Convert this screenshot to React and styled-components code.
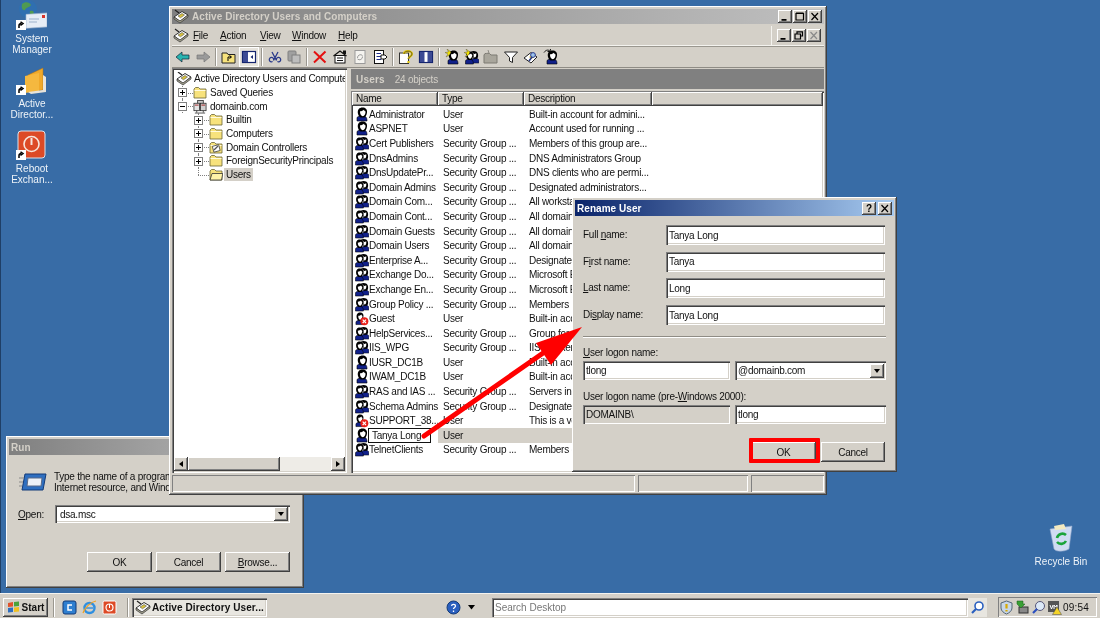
import styled, { createGlobalStyle, css } from 'styled-components';

const GlobalStyle = createGlobalStyle`
  html, body { margin: 0; padding: 0; background: #3a6ea5; }
  body { font-family: "Liberation Sans", "Noto Sans", sans-serif; font-size: 10px; letter-spacing: -0.25px; color: #111; }
  u { text-underline-offset: 1px; }
`;

const raised = css`
  background: #d4d0c8;
  box-shadow: inset -1px -1px #404040, inset 1px 1px #fff, inset -2px -2px #808080, inset 2px 2px #d4d0c8;
`;

const sunken = css`
  box-shadow: inset 1px 1px #808080, inset 2px 2px #404040, inset -1px -1px #fff, inset -2px -2px #d4d0c8;
`;

const Screen = styled.div`
  width: 1100px;
  height: 618px;
  display: flex;
  flex-direction: column;
  overflow: hidden;
  filter: blur(0.35px);
`;

const Desktop = styled.div`
  position: relative;
  flex: 1;
  background: #386ca6;
  border-left: 1px solid #1f3f66;
`;

const Glyph = styled.svg`
  flex: none;
  display: block;
`;

/* desktop icons */
const Shortcut = styled.div`
  position: absolute;
  left: ${(p) => p.$x}px;
  top: ${(p) => p.$y}px;
  width: 60px;
  display: flex;
  flex-direction: column;
  align-items: center;
  color: #eef3f8;
  line-height: 11px;
  text-align: center;
  letter-spacing: 0;
`;

const ShortcutImage = styled.div`
  position: relative;
  width: 30px;
  height: 30px;
  margin-bottom: 3px;
`;

const ShortcutArrow = styled.svg`
  position: absolute;
  left: -1px;
  bottom: 0;
  width: 10px;
  height: 10px;
`;

const Arrowlet = () => (
  <ShortcutArrow viewBox="0 0 10 10">
    <rect width="10" height="10" fill="#fff" />
    <path d="M3 8V5.5C3 4 4 3.5 5.5 3.5M4.5 1.8L7 3.5L4.5 5.5" fill="none" stroke="#000" strokeWidth="1.5" />
  </ShortcutArrow>
);

/* windows */
const Win = styled.div`
  position: absolute;
  left: ${(p) => p.$x}px;
  top: ${(p) => p.$y}px;
  width: ${(p) => p.$w}px;
  height: ${(p) => p.$h}px;
  box-sizing: border-box;
  padding: 3px;
  display: flex;
  flex-direction: column;
  ${raised}
`;

const TitleBar = styled.div`
  flex: none;
  height: ${(p) => p.$h || 16}px;
  display: flex;
  align-items: center;
  padding: 0 2px 0 ${(p) => p.$pad || 2}px;
  gap: 3px;
  font-weight: 700;
  color: ${(p) => (p.$active ? '#fff' : '#d4d0c8')};
  background: ${(p) =>
    p.$active
      ? 'linear-gradient(90deg, #0a246a, #a6caf0)'
      : 'linear-gradient(90deg, #808080, #c0c0c0)'};
`;

const TitleText = styled.span`
  flex: 1;
  white-space: nowrap;
  letter-spacing: 0.05px;
`;

const CapsGroup = styled.div`
  display: flex;
  gap: ${(p) => p.$gap || 0}px;
`;

const CapButton = styled.div`
  width: 14px;
  height: 13px;
  display: flex;
  align-items: center;
  justify-content: center;
  font-size: 10px;
  font-weight: 700;
  color: #000;
  ${raised}
`;

const CapIcon = ({ d, dim }) => (
  <svg width="10" height="9" viewBox="0 0 10 9">
    <path d={d} fill="none" stroke={dim ? '#8a8a8a' : '#000'} strokeWidth="1.2" />
  </svg>
);

const MIN = 'M1.5 7.5H6.5M1.5 8.2H6.5';
const MAX = 'M1 1.5H8.5V8H1ZM1 1H8.5';
const CLOSE = 'M1.5 1L8 8M8 1L1.5 8';
const RESTORE = 'M3 2.5V0.8H8.5V5H7M1 3H6.5V8H1Z';

const MenuBar = styled.div`
  flex: none;
  height: 19px;
  display: flex;
  align-items: center;
  margin-top: 2px;
  border-bottom: 1px solid #f4f3ef;
  box-shadow: 0 1px 0 #9a978f;
`;

const MenuIcon = styled.div`
  width: 20px;
  padding-left: 1px;
  display: flex;
`;

const MenuItem = styled.span`
  width: ${(p) => p.$w}px;
`;

const MdiButtons = styled.div`
  margin-left: auto;
  height: 100%;
  display: flex;
  align-items: center;
  gap: 1px;
  padding: 0 3px 0 5px;
  border-left: 1px solid #f4f3ef;
`;

const Toolbar = styled.div`
  flex: none;
  height: 21px;
  display: flex;
  align-items: center;
  padding-left: 1px;
  border-bottom: 1px solid #8f8c85;
`;

const ToolButton = styled.div`
  width: 19.9px;
  height: 20px;
  display: flex;
  align-items: center;
  justify-content: center;
  ${(p) => p.$on && 'box-shadow: inset 1px 1px #fff, inset -1px -1px #fff; background: #e6e3dc;'}
`;

const ToolSep = styled.div`
  width: 2px;
  height: 18px;
  margin: 0 2px;
  border-left: 1px solid #9a978f;
  border-right: 1px solid #fff;
  box-sizing: border-box;
`;

const Panes = styled.div`
  flex: 1;
  min-height: 0;
  display: flex;
  gap: 4px;
`;

const TreePane = styled.div`
  position: relative;
  width: 175px;
  flex: none;
  box-sizing: border-box;
  padding: 4px 2px 2px;
  display: flex;
  flex-direction: column;
  background: #fff;
  overflow: hidden;
  ${sunken}
`;

const TreeBody = styled.div`
  flex: 1;
  overflow: hidden;
`;

const TreeRow = styled.div`
  height: 13.7px;
  display: flex;
  align-items: center;
  padding-left: ${(p) => (p.$depth ? (p.$depth - 1) * 16 : 2)}px;
  white-space: nowrap;
`;

const Expander = styled.div`
  position: relative;
  flex: none;
  width: 16px;
  height: 100%;
  margin-right: 3px;

  &::before {
    content: '';
    position: absolute;
    left: 8px;
    top: 0;
    bottom: ${(p) => (p.$last ? '50%' : 0)};
    border-left: 1px dotted #808080;
  }
  &::after {
    content: '';
    position: absolute;
    left: 8px;
    right: -3px;
    top: 50%;
    border-top: 1px dotted #808080;
  }
`;

const PlusBox = styled.div`
  position: absolute;
  z-index: 1;
  left: 4px;
  top: 2.5px;
  width: 9px;
  height: 9px;
  box-sizing: border-box;
  border: 1px solid #808080;
  background:
    linear-gradient(#000, #000) center / 5px 1px no-repeat,
    ${(p) => (p.$open ? '#fff' : 'linear-gradient(#000, #000) center / 1px 5px no-repeat, #fff')};
`;

const TreeLabel = styled.span`
  margin-left: ${(p) => (p.$root ? 0 : 1)}px;
  padding: 0 2px;
  line-height: 13px;
  ${(p) => p.$selected && 'background: #d4d0c8;'}
`;

const HScroll = styled.div`
  flex: none;
  height: 14px;
  display: flex;
  background: #eeece7;
`;

const ScrollArrow = styled.div`
  width: 14px;
  display: flex;
  align-items: center;
  justify-content: center;
  ${raised}
  ${(p) => p.$right && 'margin-left: auto;'}
  &::before {
    content: '';
    border: 3.5px solid transparent;
    ${(p) =>
      p.$right
        ? 'border-right-width: 0; border-left: 4px solid #000;'
        : 'border-left-width: 0; border-right: 4px solid #000;'}
  }
`;

const ScrollThumb = styled.div`
  width: 92px;
  ${raised}
`;

const ListPane = styled.div`
  flex: 1;
  min-width: 0;
  display: flex;
  flex-direction: column;
`;

const ListBanner = styled.div`
  flex: none;
  height: 20px;
  display: flex;
  align-items: center;
  gap: 10px;
  padding-left: 5px;
  background: #808080;
  color: #d4d0c8;
  border-top: 1px solid #d4d0c8;
  strong { letter-spacing: 0.2px; }
`;

const ListFrame = styled.div`
  flex: 1;
  min-height: 0;
  margin-top: 2px;
  padding: 1px;
  background: #fff;
  display: flex;
  flex-direction: column;
  overflow: hidden;
  ${sunken}
`;

const ColumnHeads = styled.div`
  flex: none;
  height: 14px;
  display: grid;
  grid-template-columns: 86px 86px 128px 1fr;
  margin-bottom: 1px;
`;

const ColumnHead = styled.div`
  padding-left: 4px;
  line-height: 14px;
  background: #d4d0c8;
  box-shadow: inset -1px -1px #404040, inset 1px 1px #fff, inset -2px -2px #808080;
`;

const Row = styled.div`
  height: 14.6px;
  display: grid;
  grid-template-columns: 86px 86px 128px;
  align-items: center;
  white-space: nowrap;
`;

const NameCell = styled.div`
  display: flex;
  align-items: center;
  padding-left: 3px;
  overflow: hidden;
`;

const NameText = styled.span`
  line-height: 13px;
  ${(p) => p.$editing && 'outline: 1px solid #111; padding: 0 9px 0 3px;'}
`;

const TextCell = styled.div`
  padding-left: 5px;
  height: 100%;
  display: flex;
  align-items: center;
  overflow: hidden;
  ${(p) => p.$selected && 'background: #d4d0c8;'}
`;

const SelectedFill = styled.div`
  background: #d4d0c8;
  height: 100%;
`;

const StatusBar = styled.div`
  flex: none;
  height: 17px;
  margin-top: 2px;
  display: grid;
  grid-template-columns: 463px 110px 1fr;
  gap: 3px;
`;

const StatusCell = styled.div`
  box-shadow: inset 1px 1px #808080, inset -1px -1px #fff;
`;

/* dialog content */
const DialogBody = styled.div`
  flex: 1;
  display: flex;
  flex-direction: column;
  padding: 9px 8px 0 8px;
`;

const FieldGrid = styled.div`
  display: grid;
  grid-template-columns: 83px 219px;
  grid-auto-rows: 20px;
  gap: 6.7px 0;
  align-items: center;
`;

const FieldLabel = styled.label`
  line-height: 12px;
`;

const TextBox = styled.div`
  height: ${(p) => p.$h || 20}px;
  box-sizing: border-box;
  padding: 0 3px;
  display: flex;
  align-items: center;
  white-space: nowrap;
  background: ${(p) => (p.$disabled ? '#d4d0c8' : '#fff')};
  ${sunken}
`;

const Divider = styled.div`
  margin: 11px 0 9px;
  border-top: 1px solid #8f8c85;
  border-bottom: 1px solid #fff;
`;

const LogonRow = styled.div`
  display: grid;
  grid-template-columns: 147px 151px;
  justify-content: space-between;
  width: 303px;
  margin-top: 2px;
`;

const SectionLabel = styled.div`
  line-height: 12px;
  margin-top: ${(p) => p.$mt || 0}px;
`;

const ComboArrow = styled.div`
  margin-left: auto;
  margin-right: -1px;
  width: 14px;
  height: 14px;
  display: flex;
  align-items: center;
  justify-content: center;
  ${raised}
  &::before {
    content: '';
    border: 3.5px solid transparent;
    border-bottom-width: 0;
    border-top: 4px solid #000;
  }
`;

const ButtonRow = styled.div`
  display: flex;
  justify-content: flex-end;
  gap: ${(p) => p.$gap || 4}px;
  margin-top: ${(p) => p.$mt || 0}px;
  padding-right: ${(p) => p.$pr || 0}px;
`;

const Button = styled.div`
  width: ${(p) => p.$w || 65}px;
  height: 20px;
  display: flex;
  align-items: center;
  justify-content: center;
  ${raised}
`;

const RunBody = styled.div`
  flex: 1;
  display: flex;
  flex-direction: column;
  padding: 0 8px;
`;

const RunIntro = styled.div`
  display: flex;
  align-items: center;
  gap: 7px;
  margin-top: 16px;
  padding-left: 2px;
  white-space: nowrap;
  line-height: 11px;
`;

const RunOpen = styled.div`
  display: flex;
  align-items: center;
  margin-top: 12px;
  padding-left: 1px;
`;

const RunLabel = styled.label`
  width: 37px;
`;

const RunInput = styled(TextBox)`
  width: 235px;
  padding-left: 5px;
`;

/* annotation */
const RedBox = styled.div`
  position: absolute;
  left: 748px;
  top: 438px;
  width: 71px;
  height: 25px;
  box-sizing: border-box;
  border: 4px solid #f00;
  border-radius: 1px;
`;

const Overlay = styled.svg`
  position: absolute;
  left: 0;
  top: 0;
  width: 1100px;
  height: 593px;
  pointer-events: none;
`;

/* taskbar */
const Taskbar = styled.div`
  flex: none;
  height: 25px;
  box-sizing: border-box;
  display: flex;
  align-items: center;
  padding: 2px 3px 0 3px;
  background: #d4d0c8;
  border-top: 1px solid #f4f3ef;
`;

const StartButton = styled.div`
  width: 45px;
  height: 19px;
  display: flex;
  align-items: center;
  justify-content: center;
  gap: 2px;
  font-weight: 700;
  letter-spacing: 0;
  ${raised}
`;

const TaskSep = styled.div`
  flex: none;
  width: 2px;
  height: 19px;
  margin: 0 ${(p) => p.$gap || 5}px;
  box-sizing: border-box;
  border-left: 1px solid #9a978f;
  border-right: 1px solid #fff;
`;

const QuickLaunch = styled.div`
  display: flex;
  gap: 5px;
  padding: 0 7px 0 2px;
`;

const TaskButton = styled.div`
  flex: none;
  width: 135px;
  height: 19px;
  box-sizing: border-box;
  display: flex;
  align-items: center;
  gap: 1px;
  padding-left: 3px;
  font-weight: 700;
  letter-spacing: 0.1px;
  background: #e8e6e0;
  white-space: nowrap;
  ${sunken}
`;

const DeskbarHelp = styled.div`
  margin-left: 179px;
  display: flex;
  align-items: center;
  gap: 7px;
`;

const SearchWrap = styled.div`
  display: flex;
  margin-left: 17px;
  height: 19px;
`;

const SearchBox = styled.div`
  width: 476px;
  box-sizing: border-box;
  padding-left: 3px;
  display: flex;
  align-items: center;
  color: #777;
  background: #fff;
  letter-spacing: 0;
  ${sunken}
`;

const SearchGo = styled.div`
  width: 19px;
  display: flex;
  align-items: center;
  justify-content: center;
  background: #e8e6e0;
`;

const Tray = styled.div`
  margin-left: auto;
  flex: none;
  width: 99px;
  height: 20px;
  box-sizing: border-box;
  display: flex;
  align-items: center;
  gap: 1px;
  padding: 0 8px 0 1px;
  box-shadow: inset 1px 1px #808080, inset -1px -1px #fff;
`;

const Clock = styled.span`
  margin-left: auto;
  letter-spacing: 0.2px;
`;

/* drawings */
const Snap = () => (
  <Glyph width="16" height="15" viewBox="0 0 16 15">
    <path d="M1 8L9 2.5L15 6L7 12.5Z" fill="#fff" stroke="#333" />
    <path d="M1 10L7 14L15 8V6L7 12L1 8Z" fill="#a5a28f" stroke="#333" strokeWidth="0.7" />
    <path d="M5 7L9 4.5L11.5 6L7.5 8.8Z" fill="#d9c33d" stroke="#555" strokeWidth="0.6" />
    <path d="M2 1L6 4" stroke="#222" strokeWidth="1.2" />
  </Glyph>
);

const User = () => (
  <Glyph width="14" height="15" viewBox="0 0 14 15">
    <path d="M2 14V11C2 9.6 4 9 7 9C10 9 12 9.6 12 14Z" fill="#10208a" stroke="#000" strokeWidth="0.6" />
    <path d="M3 7C2 2.5 4.5 0.5 7.5 0.5C10.5 0.5 12.5 2.5 12 5.5C11.7 8 10.8 9.5 9.5 10.5H5.5C4.2 9.8 3.5 8.5 3 7Z" fill="#000" />
    <path d="M5 4.3C6.8 4.3 8 3.7 9 2.8C9.3 3.8 10 4.3 10.6 4.5C10.6 6.8 9.4 9.2 7.8 9.2C6.3 9.2 4.8 7 5 4.3Z" fill="#fff" />
  </Glyph>
);

const Group = () => (
  <Glyph width="14" height="15" viewBox="0 0 15 15">
    <path d="M6 1.5C8 0 12.5 0 13.6 3C14.4 5 14.4 7.5 12.5 9H9V2.8Z" fill="#000" />
    <path d="M9.3 3.5C10 3.8 11.2 3.5 12 3C12.4 5 11.8 7.2 10.6 7.5C9.6 7.7 9.3 5.5 9.3 3.5Z" fill="#fff" />
    <path d="M6.5 9L13.5 8.5C15 9.5 15 11 14.8 13.5H6.5Z" fill="#10208a" stroke="#000" strokeWidth="0.5" />
    <path d="M0.5 14.5V11.3C0.5 10 2.5 9.4 4.5 9.4C7.5 9.4 9 10.6 9 14.5Z" fill="#10208a" stroke="#000" strokeWidth="0.6" />
    <path d="M1.5 7.5C0.3 3 2.5 1 5 1C8 1 9.3 3 8.8 5.6C8.5 7.6 7.8 9.2 6.6 10.2H3.5C2.6 9.5 2 8.5 1.5 7.5Z" fill="#000" />
    <path d="M3 4.6C4.5 4.6 5.6 4 6.4 3.3C6.7 4.1 7.2 4.5 7.8 4.7C7.8 6.6 6.6 8.8 5.3 8.8C4 8.8 2.9 6.8 3 4.6Z" fill="#fff" />
  </Glyph>
);

const DisabledUser = () => (
  <Glyph width="14" height="15" viewBox="0 0 15 15">
    <path d="M1 14V11.5C1 10 3 9.5 5 9.5C8 9.5 9 10.5 9 14Z" fill="#10208a" stroke="#000" strokeWidth="0.6" />
    <path d="M2 7.5C0.8 3 3 1 5.5 1C8.3 1 9.5 2.8 9 5.5C8.8 7.5 8 9 7 10H4C3 9.5 2.5 8.5 2 7.5Z" fill="#000" />
    <path d="M3.5 4.5C5 4.5 6 4 6.8 3.2C7 4 7.5 4.5 8 4.7C8 6.5 7 8.8 5.6 8.8C4.3 8.8 3.3 6.8 3.5 4.5Z" fill="#fff" />
    <circle cx="10" cy="10.5" r="4.3" fill="#e8201a" />
    <path d="M8.2 8.7L11.8 12.3M11.8 8.7L8.2 12.3" stroke="#fff" strokeWidth="1.2" />
  </Glyph>
);

const Folder = ({ open, ou }) => (
  <Glyph width="14" height="13" viewBox="0 0 14 13">
    <path d="M1 3V12H13V3H7L5.5 1.5H2.5Z" fill="#f7e27c" stroke="#6b6636" strokeWidth="0.8" />
    {open && <path d="M1 12L3 5.5H13.8L12.5 12Z" fill="#fff3a8" stroke="#333" strokeWidth="0.8" />}
    {!open && <path d="M1.5 4.5H12.5" stroke="#fffbe0" />}
    {ou && (
      <g>
        <rect x="4" y="4.5" width="6.5" height="6" fill="#fff" stroke="#333" strokeWidth="0.7" transform="rotate(-15 7 7.5)" />
        <path d="M5 9L9 5" stroke="#555" strokeWidth="1.2" />
      </g>
    )}
  </Glyph>
);

const Server = () => (
  <Glyph width="14" height="15" viewBox="1 0 15 15">
    <rect x="6" y="1" width="6" height="8" fill="#c8c8c8" stroke="#222" strokeWidth="0.8" />
    <rect x="2" y="4" width="6" height="8" fill="#e4e4e4" stroke="#222" strokeWidth="0.8" />
    <rect x="9" y="4" width="6" height="8" fill="#d0d0d0" stroke="#222" strokeWidth="0.8" />
    <path d="M3 6H7M10 6H14" stroke="#a02020" />
    <path d="M5 12V14M12 12V14M3 14.5H14" stroke="#222" strokeWidth="0.8" />
  </Glyph>
);

const tools = [
  <path key="a" d="M1 8L7 3V6H14V10H7V13Z" fill="#28b4b0" stroke="#123" strokeWidth="0.7" />,
  <path key="b" d="M15 8L9 3V6H2V10H9V13Z" fill="#9a9a9a" stroke="#777" strokeWidth="0.7" />,
  null,
  <g key="c"><path d="M1 4H6L7 5.5H14V14H1Z" fill="#f7e27c" stroke="#222" /><path d="M7 12V8H10M8.5 6.5L10.5 8L8.5 9.5" fill="none" stroke="#000" /></g>,
  <g key="d"><rect x="1.5" y="2.5" width="13" height="11" fill="#fff" stroke="#15256f" strokeWidth="1.2" /><rect x="2" y="3" width="5" height="10" fill="#3c4a94" /><path d="M12 6L9.5 8L12 10Z" fill="#15256f" /></g>,
  null,
  <path key="e" d="M5 1L9.5 9.5M11 1L6.5 9.5M6.5 9.5A2.2 2.2 0 1 0 5.6 10.5M9.5 9.5A2.2 2.2 0 1 1 10.4 10.5" transform="translate(0 2)" fill="none" stroke="#2a3a8a" strokeWidth="1.3" />,
  <g key="f"><rect x="2" y="2" width="8" height="10" rx="1" fill="#a0a0a0" stroke="#808080" /><rect x="6" y="6" width="8" height="8" fill="#bdbdbd" stroke="#808080" /></g>,
  null,
  <path key="g" d="M2 2.5L13.5 13.5M13.5 2.5L2 13.5" stroke="#e41010" strokeWidth="2" />,
  <g key="h"><path d="M1.5 7L8 2L14.5 7" fill="none" stroke="#111" strokeWidth="1.2" /><rect x="3" y="6.5" width="10" height="7.5" fill="#fff" stroke="#111" /><path d="M5 9H11M5 11.5H11" stroke="#111" /><rect x="11" y="1.5" width="3" height="3.5" fill="#111" /></g>,
  <g key="i"><rect x="3" y="1.5" width="10" height="13" fill="#f4f3ef" stroke="#9a9a9a" /><path d="M5.5 9A3 3 0 0 1 10.5 6.5M10.5 7.5A3 3 0 0 1 5.5 10" fill="none" stroke="#9a9a9a" /></g>,
  <g key="j"><rect x="2.5" y="1.5" width="9" height="13" fill="#fff" stroke="#111" /><path d="M4.5 4.5H9M4.5 7.5H9M4.5 10.5H9" stroke="#1b2a8a" strokeWidth="1.2" /><path d="M9 6H13L15 8L13 10H9Z" fill="#fff" stroke="#111" /></g>,
  null,
  <g key="k"><rect x="1.5" y="4" width="9" height="10.5" fill="#fff" stroke="#333" /><path d="M6 5C6 1.5 14 1 14 5C14 7.5 10.5 7.5 10.5 10M10.5 12V14" fill="none" stroke="#e3c810" strokeWidth="2.2" /><path d="M6 5C6 1.5 14 1 14 5C14 7.5 10.5 7.5 10.5 10" fill="none" stroke="#222" strokeWidth="0.6" /></g>,
  <g key="l"><rect x="1.5" y="2.5" width="13" height="11" fill="#fff" stroke="#15256f" strokeWidth="1.2" /><rect x="2" y="3" width="4.5" height="10" fill="#3c4a94" /><rect x="9.5" y="3" width="4.5" height="10" fill="#3c4a94" /></g>,
  null,
];

const dirTools = [
  <g key="m"><g transform="translate(2 1)"><User /></g><path d="M3 0L4.5 3L1 3.5L4 5L2 8L5.5 6L7 3Z" fill="#f6e600" stroke="#444" strokeWidth="0.4" /></g>,
  <g key="n"><g transform="translate(1 1)"><Group /></g><path d="M2 0L3.5 3L0 3.5L3 5L1 8L4.5 6L6 3Z" fill="#f6e600" stroke="#444" strokeWidth="0.4" /></g>,
  <g key="o"><path d="M1 6V14H14V6H8L6.5 4.5H2Z" fill="#a9a69c" stroke="#7c7a72" /><path d="M5 1L6 4L3 4.5" stroke="#8f8c85" fill="none" /></g>,
  <path key="p" d="M1.5 3H14.5L9.5 8.5V13.5L6.5 12V8.5Z" fill="#fff" stroke="#222" />,
  <g key="q"><path d="M1 9L8 3.5L14 8L8 14Z" fill="#fff" stroke="#222" /><path d="M6 8L9.5 5.5L12 7.5L8.5 10Z" fill="#d9c33d" /><circle cx="10" cy="6" r="2.4" fill="#9cc4ec" stroke="#2a3a8a" /><path d="M9 8L6 12" stroke="#2a3a8a" strokeWidth="1.5" /></g>,
  <g key="r"><g transform="translate(2 1)"><User /></g><path d="M1 3.5C3 0.5 6 0.5 7 2.5M7 2.5L4.5 2.5M7 2.5L7.5 0" fill="none" stroke="#111" /></g>,
];

const ToolIcon = ({ children }) => (
  <svg width="16" height="16" viewBox="0 0 16 16">{children}</svg>
);

const rows = [
  ['Administrator', 'User', 'Built-in account for admini...', 'u'],
  ['ASPNET', 'User', 'Account used for running ...', 'u'],
  ['Cert Publishers', 'Security Group ...', 'Members of this group are...', 'g'],
  ['DnsAdmins', 'Security Group ...', 'DNS Administrators Group', 'g'],
  ['DnsUpdatePr...', 'Security Group ...', 'DNS clients who are permi...', 'g'],
  ['Domain Admins', 'Security Group ...', 'Designated administrators...', 'g'],
  ['Domain Com...', 'Security Group ...', 'All workstations and serve...', 'g'],
  ['Domain Cont...', 'Security Group ...', 'All domain controllers in t...', 'g'],
  ['Domain Guests', 'Security Group ...', 'All domain guests', 'g'],
  ['Domain Users', 'Security Group ...', 'All domain users', 'g'],
  ['Enterprise A...', 'Security Group ...', 'Designated administrators...', 'g'],
  ['Exchange Do...', 'Security Group ...', 'Microsoft Exchange Domain', 'g'],
  ['Exchange En...', 'Security Group ...', 'Microsoft Exchange Enterp...', 'g'],
  ['Group Policy ...', 'Security Group ...', 'Members in this group can...', 'g'],
  ['Guest', 'User', 'Built-in account for guest ...', 'd'],
  ['HelpServices...', 'Security Group ...', 'Group for the Help and Su...', 'g'],
  ['IIS_WPG', 'Security Group ...', 'IIS Worker Process Group', 'g'],
  ['IUSR_DC1B', 'User', 'Built-in account for anony...', 'u'],
  ['IWAM_DC1B', 'User', 'Built-in account for Intern...', 'u'],
  ['RAS and IAS ...', 'Security Group ...', 'Servers in this group can ...', 'g'],
  ['Schema Admins', 'Security Group ...', 'Designated administrators...', 'g'],
  ['SUPPORT_38...', 'User', "This is a vendor's account...", 'd'],
  ['Tanya Long', 'User', '', 'u', true],
  ['TelnetClients', 'Security Group ...', 'Members of this group hav...', 'g'],
];

const RowIcon = ({ kind }) => {
  if (kind === 'u') return <User />;
  if (kind === 'd') return <DisabledUser />;
  return <Group />;
};

const TreeNode = ({ depth, last, open, icon, selected, children }) => (
  <TreeRow $depth={depth}>
    <Expander $last={last}>{!last && <PlusBox $open={open} />}</Expander>
    {icon}
    <TreeLabel $selected={selected}>{children}</TreeLabel>
  </TreeRow>
);

export default function App() {
  return (
    <Screen>
      <GlobalStyle />
      <Desktop>
        <Shortcut $x={1} $y={0}>
          <ShortcutImage>
            <svg width="30" height="30" viewBox="0 0 30 30">
              <circle cx="11" cy="9" r="9" fill="#2f6fb0" />
              <path d="M5 4C8 1 13 2 14 5C12 8 9 7 8 10C6 11 4 8 5 4ZM13 11C16 10 18 12 16 15C14 16 12 14 13 11Z" fill="#4f9a52" />
              <rect x="9" y="15" width="21" height="14" fill="#e6edf6" stroke="#9db2cc" strokeWidth="0.6" transform="skewY(-4)" />
              <path d="M12 19H22M12 22H20" stroke="#9db2cc" />
              <rect x="25" y="15" width="3" height="3" fill="#d9342a" />
            </svg>
            <Arrowlet />
          </ShortcutImage>
          <span>System<br />Manager</span>
        </Shortcut>
        <Shortcut $x={1} $y={65}>
          <ShortcutImage>
            <svg width="30" height="30" viewBox="0 0 30 30">
              <path d="M11 10L26 3V25L11 27Z" fill="#f0a92a" stroke="#a8701a" strokeWidth="0.5" />
              <path d="M8 11L22 8V26L8 28Z" fill="#f5b83f" />
              <path d="M26 10L29 12V27L14 29L11 27L26 25Z" fill="#e9e4da" />
            </svg>
            <Arrowlet />
          </ShortcutImage>
          <span>Active<br />Director...</span>
        </Shortcut>
        <Shortcut $x={1} $y={130}>
          <ShortcutImage>
            <svg width="30" height="30" viewBox="0 0 30 30">
              <rect x="1" y="1" width="27" height="27" rx="3" fill="#dd4a26" stroke="#d9e3ee" />
              <circle cx="14.5" cy="14" r="7.5" fill="none" stroke="#f7e5dc" strokeWidth="1.6" />
              <path d="M14.5 8V15" stroke="#f7e5dc" strokeWidth="2" />
            </svg>
            <Arrowlet />
          </ShortcutImage>
          <span>Reboot<br />Exchan...</span>
        </Shortcut>
        <Shortcut $x={1030} $y={523}>
          <ShortcutImage>
            <svg width="30" height="30" viewBox="0 0 30 30">
              <path d="M4 6L26 3L23 26C18 29 10 29 8 26Z" fill="#cfdcf2" stroke="#8fa4c8" strokeWidth="0.6" />
              <path d="M8 3L18 1L20 6L9 7Z" fill="#f3e9c0" />
              <path d="M11 15A5.5 5.5 0 0 1 20 12M20 18A5.5 5.5 0 0 1 11 19" fill="none" stroke="#1aa43a" strokeWidth="2.6" />
            </svg>
          </ShortcutImage>
          <span>Recycle Bin</span>
        </Shortcut>

        <Win $x={5} $y={436} $w={298} $h={152}>
          <TitleBar $pad={2}>
            <TitleText>Run</TitleText>
          </TitleBar>
          <RunBody>
            <RunIntro>
              <Glyph width="28" height="22" viewBox="0 0 28 22">
                <path d="M6 3H27L24 19H3Z" fill="#2f6fc0" stroke="#123a78" />
                <path d="M9 7H23L22 15H8Z" fill="#eef2f8" stroke="#5a6a88" />
                <path d="M0 7H5M0 11H4M0 15H3" stroke="#8a8a8a" />
              </Glyph>
              <span>Type the name of a program, folder, document, or<br />Internet resource, and Windows will open it for you.</span>
            </RunIntro>
            <RunOpen>
              <RunLabel><u>O</u>pen:</RunLabel>
              <RunInput $h={18}>
                dsa.msc
                <ComboArrow />
              </RunInput>
            </RunOpen>
            <ButtonRow $mt={29} $pr={3} $gap={4}>
              <Button>OK</Button>
              <Button>Cancel</Button>
              <Button><span><u>B</u>rowse...</span></Button>
            </ButtonRow>
          </RunBody>
        </Win>

        <Win $x={168} $y={6} $w={658} $h={489}>
          <TitleBar $pad={1} $h={15}>
            <Snap />
            <TitleText>Active Directory Users and Computers</TitleText>
            <CapsGroup $gap={1}>
              <CapButton><CapIcon d={MIN} /></CapButton>
              <CapButton><CapIcon d={MAX} /></CapButton>
              <CapButton><CapIcon d={CLOSE} /></CapButton>
            </CapsGroup>
          </TitleBar>
          <MenuBar>
            <MenuIcon><Snap /></MenuIcon>
            <MenuItem $w={27}><u>F</u>ile</MenuItem>
            <MenuItem $w={40}><u>A</u>ction</MenuItem>
            <MenuItem $w={32}><u>V</u>iew</MenuItem>
            <MenuItem $w={46}><u>W</u>indow</MenuItem>
            <MenuItem $w={30}><u>H</u>elp</MenuItem>
            <MdiButtons>
              <CapButton><CapIcon d={MIN} /></CapButton>
              <CapButton><CapIcon d={RESTORE} /></CapButton>
              <CapButton><CapIcon d={CLOSE} dim /></CapButton>
            </MdiButtons>
          </MenuBar>
          <Toolbar>
            {tools.map((t, i) =>
              t ? (
                <ToolButton key={i} $on={i === 4}><ToolIcon>{t}</ToolIcon></ToolButton>
              ) : (
                <ToolSep key={i} />
              )
            )}
            {dirTools.map((t, i) => (
              <ToolButton key={'d' + i}><ToolIcon>{t}</ToolIcon></ToolButton>
            ))}
          </Toolbar>
          <Panes>
            <TreePane>
              <TreeBody>
                <TreeRow $depth={0}>
                  <Snap />
                  <TreeLabel $root>Active Directory Users and Computer</TreeLabel>
                </TreeRow>
                <TreeNode depth={1} icon={<Folder />}>Saved Queries</TreeNode>
                <TreeNode depth={1} open icon={<Server />}>domainb.com</TreeNode>
                <TreeNode depth={2} icon={<Folder />}>Builtin</TreeNode>
                <TreeNode depth={2} icon={<Folder />}>Computers</TreeNode>
                <TreeNode depth={2} icon={<Folder ou />}>Domain Controllers</TreeNode>
                <TreeNode depth={2} icon={<Folder />}>ForeignSecurityPrincipals</TreeNode>
                <TreeNode depth={2} last icon={<Folder open />} selected>Users</TreeNode>
              </TreeBody>
              <HScroll>
                <ScrollArrow />
                <ScrollThumb />
                <ScrollArrow $right />
              </HScroll>
            </TreePane>
            <ListPane>
              <ListBanner>
                <strong>Users</strong>
                <span>24 objects</span>
              </ListBanner>
              <ListFrame>
                <ColumnHeads>
                  <ColumnHead>Name</ColumnHead>
                  <ColumnHead>Type</ColumnHead>
                  <ColumnHead>Description</ColumnHead>
                  <ColumnHead />
                </ColumnHeads>
                {rows.map(([name, type, desc, kind, editing]) => (
                  <Row key={name}>
                    <NameCell>
                      <RowIcon kind={kind} />
                      <NameText $editing={editing}>{name}</NameText>
                    </NameCell>
                    <TextCell $selected={editing}>{type}</TextCell>
                    {editing ? <SelectedFill /> : <TextCell>{desc}</TextCell>}
                  </Row>
                ))}
              </ListFrame>
            </ListPane>
          </Panes>
          <StatusBar>
            <StatusCell />
            <StatusCell />
            <StatusCell />
          </StatusBar>
        </Win>

        <Win $x={571} $y={197} $w={325} $h={275}>
          <TitleBar $active $pad={2}>
            <TitleText>Rename User</TitleText>
            <CapsGroup $gap={2}>
              <CapButton>?</CapButton>
              <CapButton><CapIcon d={CLOSE} /></CapButton>
            </CapsGroup>
          </TitleBar>
          <DialogBody>
            <FieldGrid>
              <FieldLabel>Full <u>n</u>ame:</FieldLabel>
              <TextBox>Tanya Long</TextBox>
              <FieldLabel>F<u>i</u>rst name:</FieldLabel>
              <TextBox>Tanya</TextBox>
              <FieldLabel><u>L</u>ast name:</FieldLabel>
              <TextBox>Long</TextBox>
              <FieldLabel>Di<u>s</u>play name:</FieldLabel>
              <TextBox>Tanya Long</TextBox>
            </FieldGrid>
            <Divider />
            <SectionLabel><u>U</u>ser logon name:</SectionLabel>
            <LogonRow>
              <TextBox $h={19}>tlong</TextBox>
              <TextBox $h={19}>
                @domainb.com
                <ComboArrow />
              </TextBox>
            </LogonRow>
            <SectionLabel $mt={11}>User logon name (pre-<u>W</u>indows 2000):</SectionLabel>
            <LogonRow>
              <TextBox $h={19} $disabled>DOMAINB\</TextBox>
              <TextBox $h={19}>tlong</TextBox>
            </LogonRow>
            <ButtonRow $mt={18} $pr={1} $gap={5}>
              <Button>OK</Button>
              <Button $w={64}>Cancel</Button>
            </ButtonRow>
          </DialogBody>
        </Win>

        <RedBox />
        <Overlay viewBox="0 0 1100 593">
          <path d="M423 436L545 351" stroke="#f00" strokeWidth="5" strokeLinecap="round" />
          <path d="M581 327L535 343L550 365Z" fill="#f00" />
        </Overlay>
      </Desktop>

      <Taskbar>
        <StartButton>
          <Glyph width="13" height="12" viewBox="0 0 13 12">
            <path d="M1 2L6 1V5.5L1 6Z" fill="#e0522a" />
            <path d="M7 1L12 0.5V5L7 5.5Z" fill="#4aa33a" />
            <path d="M1 7L6 6.5V11L1 11.5Z" fill="#2f6fc0" />
            <path d="M7 6.5L12 6V10.5L7 11Z" fill="#f0c020" />
          </Glyph>
          Start
        </StartButton>
        <TaskSep $gap={5} />
        <QuickLaunch>
          <Glyph width="15" height="15" viewBox="0 0 15 15">
            <rect x="1" y="1" width="13" height="13" rx="2" fill="#2f7fd0" stroke="#123a78" />
            <path d="M10 5H6V10H10" fill="none" stroke="#fff" strokeWidth="1.5" />
          </Glyph>
          <Glyph width="15" height="15" viewBox="0 0 15 15">
            <circle cx="7.5" cy="8" r="5" fill="none" stroke="#2f8fe0" strokeWidth="2.4" />
            <path d="M4 8H11" stroke="#2f8fe0" strokeWidth="1.4" />
            <path d="M1 13C3 7 9 2 14 1" fill="none" stroke="#f0a020" strokeWidth="1.2" />
          </Glyph>
          <Glyph width="15" height="15" viewBox="0 0 15 15">
            <rect x="1" y="1" width="13" height="13" rx="1.5" fill="#dd4a26" stroke="#fff" />
            <circle cx="7.5" cy="7.5" r="3.5" fill="none" stroke="#fff" strokeWidth="1.2" />
            <path d="M7.5 4V8" stroke="#fff" />
          </Glyph>
        </QuickLaunch>
        <TaskSep $gap={3} />
        <TaskButton>
          <Snap />
          Active Directory User...
        </TaskButton>
        <DeskbarHelp>
          <Glyph width="15" height="15" viewBox="0 0 15 15">
            <circle cx="7.5" cy="7.5" r="6.5" fill="#2a5fbf" stroke="#123a78" />
            <path d="M5.5 5.8C5.8 3.8 9.5 3.8 9.5 6C9.5 7.5 7.5 7.5 7.5 9M7.5 10.5V12" fill="none" stroke="#fff" strokeWidth="1.3" />
          </Glyph>
          <Glyph width="7" height="5" viewBox="0 0 7 5"><path d="M0 0H7L3.5 4.5Z" fill="#000" /></Glyph>
        </DeskbarHelp>
        <SearchWrap>
          <SearchBox>Search Desktop</SearchBox>
          <SearchGo>
            <Glyph width="15" height="15" viewBox="0 0 15 15">
              <circle cx="9" cy="6" r="4" fill="#fff" stroke="#2a5fbf" strokeWidth="1.6" />
              <path d="M6 9L2 13" stroke="#2a5fbf" strokeWidth="2.2" />
            </Glyph>
          </SearchGo>
        </SearchWrap>
        <Tray>
          <Glyph width="15" height="15" viewBox="0 0 15 15">
            <path d="M7.5 1L13 3V8C13 11 10 13 7.5 14C5 13 2 11 2 8V3Z" fill="#c7d6e6" stroke="#567" />
            <path d="M7.5 4V8.5M7.5 10V11.5" stroke="#d8a800" strokeWidth="2.2" />
          </Glyph>
          <Glyph width="15" height="15" viewBox="0 0 15 15">
            <rect x="4" y="7" width="9" height="6" fill="#888" stroke="#333" />
            <path d="M2 1H8V4H10L6 8L2 4Z" fill="#39a035" stroke="#1a5a1a" strokeWidth="0.5" />
          </Glyph>
          <Glyph width="15" height="15" viewBox="0 0 15 15">
            <circle cx="9" cy="6" r="4.5" fill="#dce9f8" stroke="#557" />
            <path d="M6 9L2 13" stroke="#2a4fbf" strokeWidth="2.2" />
          </Glyph>
          <Glyph width="15" height="15" viewBox="0 0 15 15">
            <rect x="1" y="1" width="11" height="11" fill="#555" />
            <path d="M3 5L4.5 9L6 5M7 9V5L8.5 7L10 5V9" fill="none" stroke="#fff" />
            <path d="M10 7L14.5 14.5H5.5Z" fill="#f5d428" stroke="#444" strokeWidth="0.5" />
          </Glyph>
          <Clock>09:54</Clock>
        </Tray>
      </Taskbar>
    </Screen>
  );
}
